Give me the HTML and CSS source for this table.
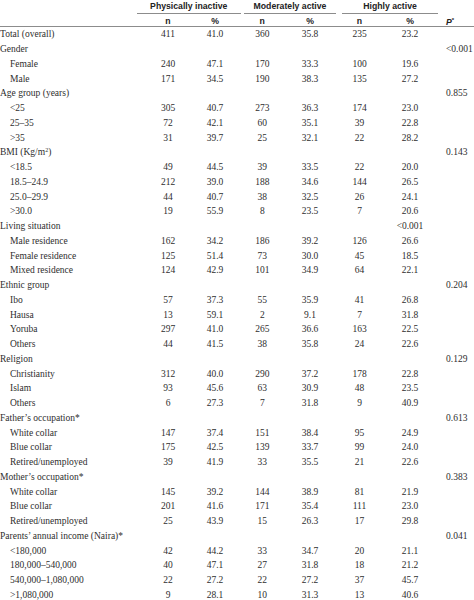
FILE: index.html
```html
<!DOCTYPE html>
<html>
<head>
<meta charset="utf-8">
<link rel="stylesheet" href="styles.css">
</head>
<body>
<div class="table">
  <div class="hrow spanrow">
    <div class="span span-pi">Physically inactive</div>
    <div class="span span-ma">Moderately active</div>
    <div class="span span-ha">Highly active</div>
  </div>
  <div class="hrow subrow">
    <div></div>
    <div class="h">n</div><div class="h">%</div>
    <div class="h">n</div><div class="h">%</div>
    <div class="h">n</div><div class="h">%</div>
    <div class="h pcol">P<sup>*</sup></div>
  </div>

  <div class="row"><div class="lab">Total (overall)</div><div>411</div><div>41.0</div><div>360</div><div>35.8</div><div>235</div><div>23.2</div></div>

  <div class="row"><div class="lab">Gender</div><div class="p">&lt;0.001</div></div>
  <div class="row"><div class="lab sub">Female</div><div>240</div><div>47.1</div><div>170</div><div>33.3</div><div>100</div><div>19.6</div></div>
  <div class="row"><div class="lab sub">Male</div><div>171</div><div>34.5</div><div>190</div><div>38.3</div><div>135</div><div>27.2</div></div>

  <div class="row"><div class="lab">Age group (years)</div><div class="p">0.855</div></div>
  <div class="row"><div class="lab sub">&lt;25</div><div>305</div><div>40.7</div><div>273</div><div>36.3</div><div>174</div><div>23.0</div></div>
  <div class="row"><div class="lab sub">25–35</div><div>72</div><div>42.1</div><div>60</div><div>35.1</div><div>39</div><div>22.8</div></div>
  <div class="row"><div class="lab sub">&gt;35</div><div>31</div><div>39.7</div><div>25</div><div>32.1</div><div>22</div><div>28.2</div></div>

  <div class="row"><div class="lab">BMI (Kg/m<sup>2</sup>)</div><div class="p">0.143</div></div>
  <div class="row"><div class="lab sub">&lt;18.5</div><div>49</div><div>44.5</div><div>39</div><div>33.5</div><div>22</div><div>20.0</div></div>
  <div class="row"><div class="lab sub">18.5–24.9</div><div>212</div><div>39.0</div><div>188</div><div>34.6</div><div>144</div><div>26.5</div></div>
  <div class="row"><div class="lab sub">25.0–29.9</div><div>44</div><div>40.7</div><div>38</div><div>32.5</div><div>26</div><div>24.1</div></div>
  <div class="row"><div class="lab sub">&gt;30.0</div><div>19</div><div>55.9</div><div>8</div><div>23.5</div><div>7</div><div>20.6</div></div>

  <div class="row"><div class="lab">Living situation</div><div class="p-ha">&lt;0.001</div></div>
  <div class="row"><div class="lab sub">Male residence</div><div>162</div><div>34.2</div><div>186</div><div>39.2</div><div>126</div><div>26.6</div></div>
  <div class="row"><div class="lab sub">Female residence</div><div>125</div><div>51.4</div><div>73</div><div>30.0</div><div>45</div><div>18.5</div></div>
  <div class="row"><div class="lab sub">Mixed residence</div><div>124</div><div>42.9</div><div>101</div><div>34.9</div><div>64</div><div>22.1</div></div>

  <div class="row"><div class="lab">Ethnic group</div><div class="p">0.204</div></div>
  <div class="row"><div class="lab sub">Ibo</div><div>57</div><div>37.3</div><div>55</div><div>35.9</div><div>41</div><div>26.8</div></div>
  <div class="row"><div class="lab sub">Hausa</div><div>13</div><div>59.1</div><div>2</div><div>9.1</div><div>7</div><div>31.8</div></div>
  <div class="row"><div class="lab sub">Yoruba</div><div>297</div><div>41.0</div><div>265</div><div>36.6</div><div>163</div><div>22.5</div></div>
  <div class="row"><div class="lab sub">Others</div><div>44</div><div>41.5</div><div>38</div><div>35.8</div><div>24</div><div>22.6</div></div>

  <div class="row"><div class="lab">Religion</div><div class="p">0.129</div></div>
  <div class="row"><div class="lab sub">Christianity</div><div>312</div><div>40.0</div><div>290</div><div>37.2</div><div>178</div><div>22.8</div></div>
  <div class="row"><div class="lab sub">Islam</div><div>93</div><div>45.6</div><div>63</div><div>30.9</div><div>48</div><div>23.5</div></div>
  <div class="row"><div class="lab sub">Others</div><div>6</div><div>27.3</div><div>7</div><div>31.8</div><div>9</div><div>40.9</div></div>

  <div class="row"><div class="lab">Father’s occupation*</div><div class="p">0.613</div></div>
  <div class="row"><div class="lab sub">White collar</div><div>147</div><div>37.4</div><div>151</div><div>38.4</div><div>95</div><div>24.9</div></div>
  <div class="row"><div class="lab sub">Blue collar</div><div>175</div><div>42.5</div><div>139</div><div>33.7</div><div>99</div><div>24.0</div></div>
  <div class="row"><div class="lab sub">Retired/unemployed</div><div>39</div><div>41.9</div><div>33</div><div>35.5</div><div>21</div><div>22.6</div></div>

  <div class="row"><div class="lab">Mother’s occupation*</div><div class="p">0.383</div></div>
  <div class="row"><div class="lab sub">White collar</div><div>145</div><div>39.2</div><div>144</div><div>38.9</div><div>81</div><div>21.9</div></div>
  <div class="row"><div class="lab sub">Blue collar</div><div>201</div><div>41.6</div><div>171</div><div>35.4</div><div>111</div><div>23.0</div></div>
  <div class="row"><div class="lab sub">Retired/unemployed</div><div>25</div><div>43.9</div><div>15</div><div>26.3</div><div>17</div><div>29.8</div></div>

  <div class="row"><div class="lab">Parents’ annual income (Naira)*</div><div class="p">0.041</div></div>
  <div class="row"><div class="lab sub">&lt;180,000</div><div>42</div><div>44.2</div><div>33</div><div>34.7</div><div>20</div><div>21.1</div></div>
  <div class="row"><div class="lab sub">180,000–540,000</div><div>40</div><div>47.1</div><div>27</div><div>31.8</div><div>18</div><div>21.2</div></div>
  <div class="row"><div class="lab sub">540,000–1,080,000</div><div>22</div><div>27.2</div><div>22</div><div>27.2</div><div>37</div><div>45.7</div></div>
  <div class="row"><div class="lab sub">&gt;1,080,000</div><div>9</div><div>28.1</div><div>10</div><div>31.3</div><div>13</div><div>40.6</div></div>
</div>
</body>
</html>
```
FILE: styles.css
```css
html, body {
  margin: 0;
  padding: 0;
  background: #ffffff;
}
body {
  width: 474px;
  overflow: hidden;
  color: #2e2e2e;
  font-family: "Liberation Serif", "Times New Roman", serif;
  font-size: 9.5px;
}
.table {
  width: 490px;
}
.hrow, .row {
  display: grid;
  grid-template-columns: 144.5px 47px 47px 47.5px 48px 51px 50px 55px;
  align-items: center;
}
.hrow {
  font-family: "Liberation Sans", Arial, sans-serif;
  font-weight: bold;
  font-size: 8.7px;
  color: #222;
}
.spanrow {
  height: 14px;
  align-items: stretch;
}
.span {
  text-align: center;
  border-bottom: 1px solid #8c8c8c;
  line-height: 12px;
}
.span-pi { grid-column: 2 / span 2; margin-left: -7.5px; margin-right: -2px; }
.span-ma { grid-column: 4 / span 2; margin-left: 5.5px; margin-right: -2px; }
.span-ha { grid-column: 6 / span 2; margin-left: 8px; margin-right: -3px; }
.subrow {
  height: 12px;
  border-bottom: 1px solid #8c8c8c;
}
.h {
  text-align: center;
  line-height: 12px;
}
.hrow .pcol {
  text-align: left;
  padding-left: 11px;
  font-style: italic;
}
.pcol sup {
  font-size: 6px;
  vertical-align: 3px;
  font-style: normal;
}
.row {
  height: 14.76px;
  line-height: 14px;
}
.row > div {
  text-align: center;
  white-space: nowrap;
}
.row > .lab {
  text-align: left;
}
.row > .lab.sub {
  padding-left: 10px;
}
.lab sup {
  font-size: 6px;
  vertical-align: 3px;
  line-height: 0;
}
.row > .p {
  grid-column: 8;
  text-align: left;
  padding-left: 11px;
}
.row > .p-ha {
  grid-column: 7;
}
```
